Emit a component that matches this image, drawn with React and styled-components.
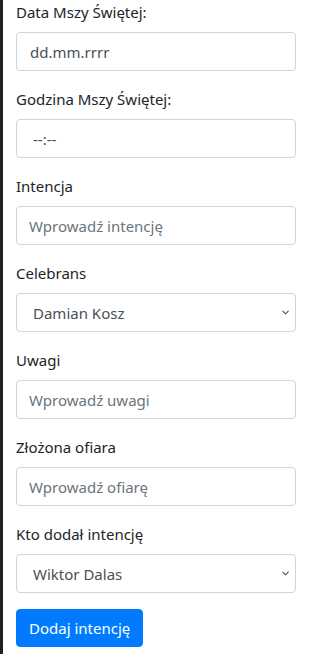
import React from 'react';
import styled, { createGlobalStyle } from 'styled-components';
import { ChevronDown } from 'lucide-react';

const GlobalStyle = createGlobalStyle`
    html, body {
        margin: 0;
        padding: 0;
        background: #fff;
    }
    body {
        font-family: "Segoe UI", "Noto Sans", "Liberation Sans", sans-serif;
        font-size: 15px;
        line-height: 24px;
        color: #212529;
    }
    * {
        box-sizing: border-box;
    }
`;

const fields = [
    { label: 'Data Mszy Świętej:', value: 'dd.mm.rrrr' },
    { label: 'Godzina Mszy Świętej:', value: '--:--' },
    { label: 'Intencja', placeholder: 'Wprowadź intencję' },
    { label: 'Celebrans', select: ['Damian Kosz'] },
    { label: 'Uwagi', placeholder: 'Wprowadź uwagi' },
    { label: 'Złożona ofiara', placeholder: 'Wprowadź ofiarę' },
    { label: 'Kto dodał intencję', select: ['Wiktor Dalas'] },
];

function App() {
    return (
        <Page>
            <GlobalStyle />
            <Form onSubmit={(e) => e.preventDefault()}>
                {fields.map((field) => {
                    return (
                        <FormGroup key={field.label}>
                            <Label>{field.label}</Label>
                            {field.select ? (
                                <SelectWrap>
                                    <Select defaultValue={field.select[0]}>
                                        {field.select.map((opt) => (
                                            <option key={opt}>{opt}</option>
                                        ))}
                                    </Select>
                                    <Chevron>
                                        <ChevronDown size={11} strokeWidth={2.5} />
                                    </Chevron>
                                </SelectWrap>
                            ) : field.value ? (
                                <Input
                                    type="text"
                                    readOnly
                                    value={field.value}
                                    $pad={field.value === '--:--' ? 16 : 13}
                                />
                            ) : (
                                <Input
                                    type="text"
                                    placeholder={field.placeholder}
                                />
                            )}
                        </FormGroup>
                    );
                })}
                <SubmitButton type="submit">Dodaj intencję</SubmitButton>
            </Form>
        </Page>
    );
}

export default App;

const Page = styled.div`
    min-height: 654px;
    border-left: 3px solid #1f1f1f;
    padding-left: 13px;
`;

const Form = styled.form`
    width: 280px;
    display: flex;
    flex-direction: column;
    align-items: flex-start;
`;

const FormGroup = styled.div`
    width: 100%;
    margin-bottom: 16px;
    display: flex;
    flex-direction: column;
`;

const Label = styled.label`
    display: block;
    margin-bottom: 8px;
    line-height: 24px;
`;

const Input = styled.input`
    display: block;
    width: 100%;
    height: 39px;
    padding: 6px 12px 6px ${(p) => p.$pad || 12}px;
    font: inherit;
    color: #495057;
    background: #fff;
    border: 1px solid #ced4da;
    border-radius: 4px;
    outline: none;

    &::placeholder {
        color: #6c757d;
        opacity: 1;
    }
`;

const SelectWrap = styled.div`
    position: relative;
    width: 100%;
`;

const Select = styled.select`
    display: block;
    width: 100%;
    height: 39px;
    padding: 6px 12px 6px 16px;
    font: inherit;
    color: #495057;
    background: #fff;
    border: 1px solid #ced4da;
    border-radius: 4px;
    appearance: none;
    outline: none;
`;

const Chevron = styled.span`
    position: absolute;
    right: 5px;
    top: 14px;
    display: flex;
    color: #555;
    pointer-events: none;
`;

const SubmitButton = styled.button`
    height: 38px;
    padding: 6px 12px;
    font: inherit;
    color: #fff;
    background: #007bff;
    border: 1px solid #007bff;
    border-radius: 4px;
    cursor: pointer;
`;
